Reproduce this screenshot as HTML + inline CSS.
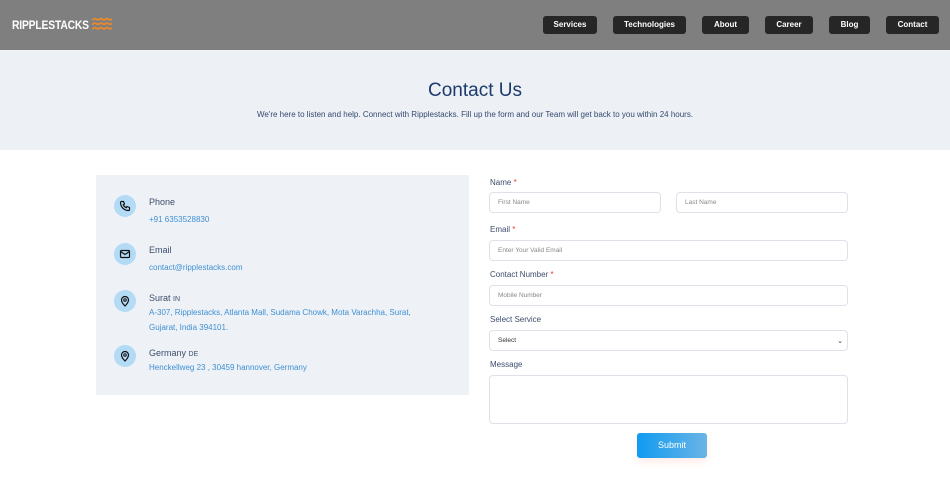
<!DOCTYPE html>
<html><head><meta charset="utf-8"><style>
*{box-sizing:border-box;margin:0;padding:0}
body{width:950px;height:477px;overflow:hidden;background:#fff;font-family:"Liberation Sans",sans-serif;position:relative}
.abs{position:absolute}
.hdr{left:0;top:0;width:950px;height:50px;background:#7f7f7f}
.logo{left:12px;top:18px;color:#fff;font-weight:bold;font-size:12px;letter-spacing:-0.2px;transform:scaleX(0.86);transform-origin:left top;white-space:nowrap}
.nb{top:16px;height:18px;background:#262626;border-radius:3px;color:#fff;font-size:8px;font-weight:bold;text-align:center;line-height:18px}
.hero{left:0;top:50px;width:950px;height:100px;background:#edf1f6}
h1{position:absolute;left:0;width:950px;top:80px;text-align:center;font-size:19px;font-weight:normal;color:#1d3a6b}
.sub{left:0;width:950px;top:110px;text-align:center;font-size:8px;color:#34496e}
.panel{left:96px;top:175px;width:373px;height:220px;background:#eef2f7}
.ic{width:22px;height:22px;border-radius:50%;background:#b3dbf6;left:114px}
.ic svg{position:absolute;left:5px;top:5px}
.t{left:149px;font-size:9px;color:#3d4d6b}
.v{left:149px;font-size:8px;color:#3f8fd2;line-height:15px}
.lbl{left:490px;font-size:8px;color:#3d4d6b}
.lbl b{color:#e53935;font-weight:normal}
.in{border:1px solid #dde2e8;border-radius:4px;background:#fff;font-size:6.5px;color:#888;padding-left:8px;display:flex;align-items:center}
.btn{left:637px;top:433px;width:70px;height:25px;border-radius:3px;background:linear-gradient(90deg,#109bf0,#6bb4e6);color:#fff;font-size:9px;text-align:center;line-height:25px;box-shadow:0 4px 8px rgba(255,160,140,.2)}
</style></head><body>
<div class="abs hdr"></div>
<div class="abs logo">RIPPLESTACKS</div>
<svg class="abs" style="left:92px;top:18px" width="20" height="13" viewBox="0 0 20 13"><g fill="none" stroke="#f08a24" stroke-width="1.6"><path d="M0 2 l3 -1.5 l3 1.5 l3 -1.5 l3 1.5 l3 -1.5 l3 1.5 l2 -1"/><path d="M0 6.5 l3 -1.5 l3 1.5 l3 -1.5 l3 1.5 l3 -1.5 l3 1.5 l2 -1"/><path d="M0 11 l3 -1.5 l3 1.5 l3 -1.5 l3 1.5 l3 -1.5 l3 1.5 l2 -1"/></g></svg>
<div class="abs nb" style="left:543px;width:54px">Services</div>
<div class="abs nb" style="left:613px;width:73px">Technologies</div>
<div class="abs nb" style="left:702px;width:47px">About</div>
<div class="abs nb" style="left:765px;width:48px">Career</div>
<div class="abs nb" style="left:829px;width:41px">Blog</div>
<div class="abs nb" style="left:886px;width:53px">Contact</div>

<div class="abs hero"></div>
<h1>Contact Us</h1>
<div class="abs sub">We're here to listen and help. Connect with Ripplestacks. Fill up the form and our Team will get back to you within 24 hours.</div>

<div class="abs panel"></div>
<div class="abs ic" style="top:195px"><svg width="12" height="12" viewBox="0 0 24 24"><path d="M5 3h4l2 5-2.5 1.5a11 11 0 0 0 6 6L16 13l5 2v4a2 2 0 0 1-2 2A16 16 0 0 1 3 5a2 2 0 0 1 2-2" fill="none" stroke="#111" stroke-width="2.4"/></svg></div>
<div class="abs t" style="top:197px">Phone</div>
<div class="abs v" style="top:212px">+91 6353528830</div>
<div class="abs ic" style="top:243px"><svg width="12" height="12" viewBox="0 0 24 24"><rect x="3" y="5" width="18" height="14" rx="2" fill="none" stroke="#111" stroke-width="2.4"/><path d="M3 7l9 6 9-6" fill="none" stroke="#111" stroke-width="2.4"/></svg></div>
<div class="abs t" style="top:245px">Email</div>
<div class="abs v" style="top:260px">contact@ripplestacks.com</div>
<div class="abs ic" style="top:290px"><svg width="12" height="12" viewBox="0 0 24 24"><path d="M12 22s7-7 7-12a7 7 0 0 0-14 0c0 5 7 12 7 12z" fill="none" stroke="#111" stroke-width="2.4"/><circle cx="12" cy="10" r="2.5" fill="none" stroke="#111" stroke-width="2.2"/></svg></div>
<div class="abs t" style="top:293px">Surat <span style="font-size:7px">IN</span></div>
<div class="abs v" style="top:305px;width:300px">A-307, Ripplestacks, Atlanta Mall, Sudama Chowk, Mota Varachha, Surat,<br>Gujarat, India 394101.</div>
<div class="abs ic" style="top:345px"><svg width="12" height="12" viewBox="0 0 24 24"><path d="M12 22s7-7 7-12a7 7 0 0 0-14 0c0 5 7 12 7 12z" fill="none" stroke="#111" stroke-width="2.4"/><circle cx="12" cy="10" r="2.5" fill="none" stroke="#111" stroke-width="2.2"/></svg></div>
<div class="abs t" style="top:348px">Germany <span style="font-size:7px">DE</span></div>
<div class="abs v" style="top:360px">Henckellweg 23 , 30459 hannover, Germany</div>

<div class="abs lbl" style="top:178px">Name <b>*</b></div>
<div class="abs in" style="left:489px;top:192px;width:172px;height:21px">First Name</div>
<div class="abs in" style="left:676px;top:192px;width:172px;height:21px">Last Name</div>
<div class="abs lbl" style="top:225px">Email <b>*</b></div>
<div class="abs in" style="left:489px;top:240px;width:359px;height:21px">Enter Your Valid Email</div>
<div class="abs lbl" style="top:270px">Contact Number <b>*</b></div>
<div class="abs in" style="left:489px;top:285px;width:359px;height:21px">Mobile Number</div>
<div class="abs lbl" style="top:315px">Select Service</div>
<div class="abs in" style="left:489px;top:330px;width:359px;height:21px;color:#333;justify-content:space-between;padding-right:4px">Select<span style="font-size:7px;color:#333">&#8964;</span></div>
<div class="abs lbl" style="top:360px">Message</div>
<div class="abs in" style="left:489px;top:375px;width:359px;height:49px"></div>
<div class="abs btn">Submit</div>
</body></html>
